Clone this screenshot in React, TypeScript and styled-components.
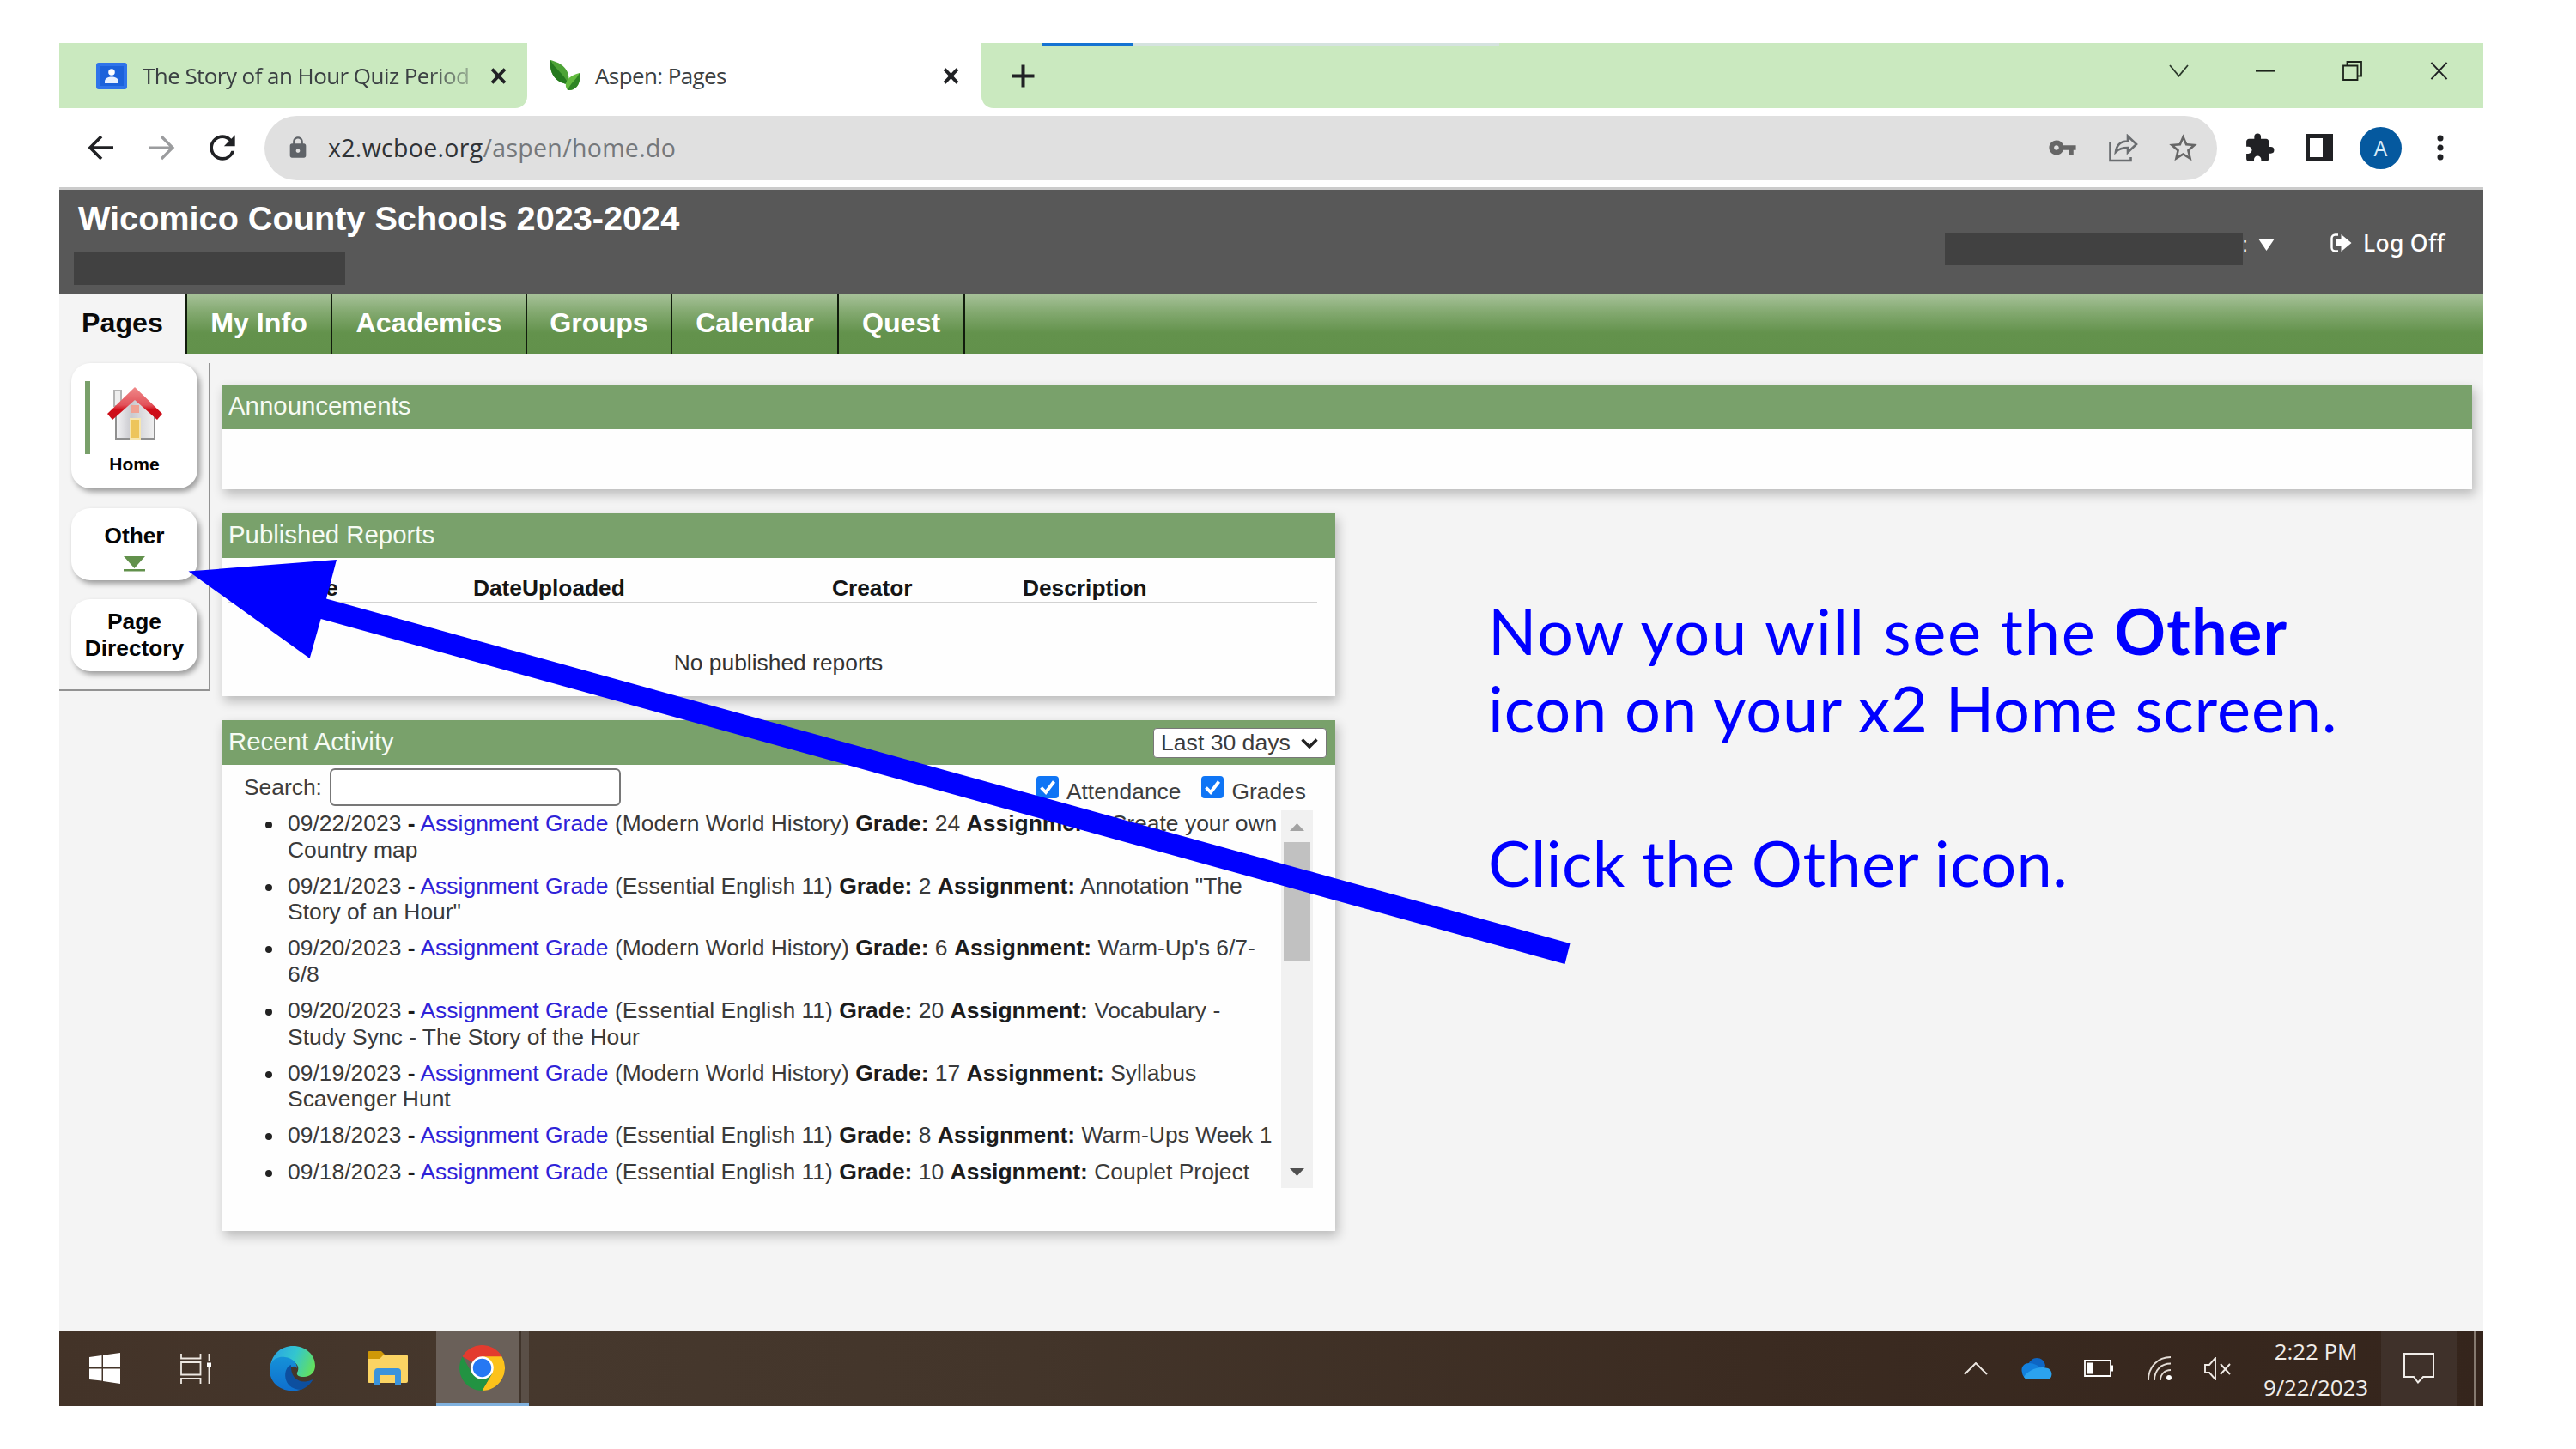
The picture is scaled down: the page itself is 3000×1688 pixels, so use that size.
import React from "react";
import styled, { createGlobalStyle } from "styled-components";
import { MdVpnKey, MdExtension, MdStarBorder, MdLock, MdRefresh } from "react-icons/md";

const ARIAL = `"Liberation Sans", Arial, sans-serif`;
const UI = `"Open Sans", "Noto Sans", sans-serif`;

const Global = createGlobalStyle`
  * { box-sizing: border-box; }
  body { margin: 0; background: #fff; font-family: ${ARIAL}; overflow: hidden; }
  svg { display: block; flex: none; }
`;

const Page = styled.div`
  position: relative;
  width: 3000px;
  height: 1688px;
  padding: 50px 108px 50px 69px;
  background: #fff;
`;
const Desktop = styled.div`
  display: flex;
  flex-direction: column;
  width: 2823px;
  height: 1588px;
`;
const Spacer = styled.div<{ $w?: number }>`
  flex: ${(p) => (p.$w === undefined ? "1" : "none")};
  width: ${(p) => (p.$w === undefined ? "auto" : p.$w + "px")};
`;

/* Browser chrome */
const TabStrip = styled.div`
  position: relative;
  display: flex;
  align-items: stretch;
  height: 76px;
  background: #cae9bf;
`;
const LoadBar = styled.div`
  position: absolute;
  top: 0;
  left: 1145px;
  width: 532px;
  height: 4px;
  background: linear-gradient(90deg, #1473d2 0 105px, #d5e3df 105px);
`;
const StripBack = styled.div`
  flex: 1;
  display: flex;
  background: #fff;
`;
const Tab = styled.div<{ $active?: boolean }>`
  display: flex;
  align-items: center;
  width: ${(p) => (p.$active ? 529 : 545)}px;
  padding-left: ${(p) => (p.$active ? 26 : 43)}px;
  background: ${(p) => (p.$active ? "#fff" : "#cae9bf")};
  border-radius: ${(p) => (p.$active ? "14px 14px 0 0" : "0 0 14px 0")};
`;
const TabTitle = styled.div<{ $w: number; $fade?: boolean; $ls: number }>`
  flex: none;
  width: ${(p) => p.$w}px;
  font: 26px/40px ${UI};
  letter-spacing: ${(p) => p.$ls}px;
  white-space: nowrap;
  color: #3b4043;
  ${(p) => p.$fade && "mask-image: linear-gradient(90deg, #000 86%, rgba(0,0,0,.3));"}
`;
const StripRest = styled.div`
  flex: 1;
  display: flex;
  align-items: center;
  background: #cae9bf;
  border-radius: 0 0 0 14px;
  padding-left: 35px;
`;
const WindowControls = styled.div`
  display: flex;
  align-items: center;
  gap: 78px;
  padding: 0 40px 12px 0;
`;
const Toolbar = styled.div`
  display: flex;
  align-items: center;
  height: 92px;
  background: #fff;
`;
const Omnibox = styled.div`
  display: flex;
  align-items: center;
  width: 2274px;
  height: 75px;
  margin-left: 27px;
  padding-left: 25px;
  border-radius: 38px;
  background: #e0e0e0;
  color: #666;
`;
const Url = styled.div`
  margin-left: 21px;
  font: 28.5px/40px ${UI};
  letter-spacing: 0.31px;
  white-space: nowrap;
  color: #75787b;
  b { font-weight: 400; color: #303336; }
`;
const Avatar = styled.div`
  width: 49px;
  height: 49px;
  margin-left: 31px;
  border-radius: 50%;
  background: #05599f;
  color: #d7ecf8;
  font: 25px/49px ${UI};
  text-align: center;
`;

/* Site header */
const Header = styled.div`
  display: flex;
  justify-content: space-between;
  height: 125px;
  border-top: 3px solid #cbcbcb;
  background: #585858;
`;
const Brand = styled.div`
  display: flex;
  flex-direction: column;
  padding: 11px 0 0 22px;
`;
const Title = styled.div`
  font: bold 39.65px/44px ${ARIAL};
  color: #fff;
  white-space: nowrap;
`;
const Redacted = styled.div<{ $w: number }>`
  width: ${(p) => p.$w}px;
  height: 38px;
  background: #414141;
`;
const BrandRedacted = styled(Redacted)`
  margin: 18px 0 0 -5px;
`;
const Session = styled.div`
  display: flex;
  align-items: center;
  height: 38px;
  margin-top: 50px;
  padding-right: 42px;
`;
const Account = styled.div`
  display: flex;
  align-items: center;
  gap: 12px;
  padding-bottom: 10px;
  margin: 0 65px 0 -1px;
  font: 24px/28px ${ARIAL};
  color: #fff;
`;
const LogOff = styled.div`
  display: flex;
  align-items: center;
  gap: 13px;
  width: 136px;
  padding-bottom: 15px;
  font: 500 26.5px/30px "Noto Sans", ${UI};
  letter-spacing: 0.3px;
  white-space: nowrap;
  color: #fff;
`;

/* Navigation */
const Nav = styled.div`
  display: flex;
  height: 69px;
  background: linear-gradient(#a6c198 0%, #83a970 30%, #63924c 65%, #62914b 100%);
`;
const NavTab = styled.div<{ $w: number; $active?: boolean }>`
  width: ${(p) => p.$w}px;
  border-right: 2px solid #111c0c;
  background: ${(p) => (p.$active ? "#f4f4f4" : "transparent")};
  color: ${(p) => (p.$active ? "#0a0a0a" : "#fff")};
  font: bold 32.2px/67px ${ARIAL};
  text-align: center;
  white-space: nowrap;
`;

/* Page body */
const Body = styled.div`
  flex: 1;
  display: flex;
  align-items: flex-start;
  background: #f4f4f4;
`;
const Sidebar = styled.div`
  display: flex;
  flex-direction: column;
  width: 176px;
  height: 382px;
  margin-top: 11px;
  padding-left: 14px;
  border-right: 2px solid #929292;
  border-bottom: 2px solid #929292;
`;
const SideCard = styled.div<{ $h: number; $gap: number; $size?: number; $top?: number; $inner?: number }>`
  position: relative;
  display: flex;
  flex-direction: column;
  align-items: center;
  justify-content: center;
  gap: ${(p) => p.$inner ?? 0}px;
  flex: none;
  width: 147px;
  height: ${(p) => p.$h}px;
  margin-bottom: ${(p) => p.$gap}px;
  padding-top: ${(p) => p.$top ?? 0}px;
  border-radius: 22px;
  background: #fff;
  box-shadow: 3px 4px 6px rgba(0, 0, 0, 0.36);
  font: bold ${(p) => p.$size ?? 26.3}px/31px ${ARIAL};
  text-align: center;
  color: #050505;
`;
const ActiveMark = styled.div`
  position: absolute;
  left: 16px;
  top: 21px;
  width: 6px;
  height: 85px;
  background: #79a06a;
`;
const Main = styled.div`
  display: flex;
  flex-direction: column;
  gap: 28px;
  padding: 36px 0 0 13px;
`;
const Panel = styled.div<{ $w: number; $h: number }>`
  width: ${(p) => p.$w}px;
  height: ${(p) => p.$h}px;
  background: #fefefe;
  box-shadow: 3px 6px 12px rgba(0, 0, 0, 0.24);
`;
const PanelHead = styled.div`
  display: flex;
  justify-content: space-between;
  height: 52px;
  padding: 0 10px 0 8px;
  background: #79a16b;
  color: #f6fbf3;
  font: 29.4px/50px ${ARIAL};
`;
const HeadRow = styled.div`
  display: grid;
  grid-template-columns: 229px 418px 222px 1fr;
  height: 35px;
  margin: 18px 21px 0 8px;
  padding-left: 56px;
  border-bottom: 2px solid #d2d2d2;
  font: bold 26.3px/34px ${ARIAL};
  color: #151515;
`;
const Empty = styled.div`
  margin-top: 51px;
  text-align: center;
  font: 26.4px/36px ${ARIAL};
  color: #333;
`;
const Select = styled.div`
  display: flex;
  align-items: center;
  justify-content: space-between;
  width: 202px;
  height: 35px;
  margin-top: 9px;
  padding: 0 9px 0 8px;
  border: 1px solid #777;
  border-radius: 4px;
  background: #fff;
  color: #3c3c3c;
  font: 26.6px/31px ${ARIAL};
  white-space: nowrap;
`;
const FilterRow = styled.div`
  display: flex;
  align-items: center;
  height: 52px;
  padding: 0 34px 0 26px;
  font: 26.4px/30px ${ARIAL};
  color: #3e3e3e;
`;
const SearchBox = styled.div`
  width: 339px;
  height: 44px;
  margin-left: 9px;
  border: 2px solid #777;
  border-radius: 6px;
  background: #fff;
`;
const CheckLabel = styled.div`
  padding-top: 10px;
  margin-left: 9px;
`;
const Feed = styled.div`
  display: flex;
  justify-content: space-between;
  height: 442px;
  padding: 1px 26px 0 0;
`;
const List = styled.ul`
  margin: 0;
  padding: 0 0 0 77px;
  font: 26.46px/30.5px ${ARIAL};
  color: #3a3a3a;
  white-space: nowrap;
  list-style: none;
`;
const Item = styled.li`
  position: relative;
  margin-bottom: 11.7px;
  &::before {
    content: "";
    position: absolute;
    left: -26px;
    top: 13px;
    width: 8px;
    height: 8px;
    border-radius: 50%;
    background: #222;
  }
  a { color: #2f22d8; }
  b { color: #1c1c1c; }
`;
const Scrollbar = styled.div`
  display: flex;
  flex-direction: column;
  align-items: center;
  width: 37px;
  height: 440px;
  background: #f1f1f1;
  padding: 15px 0 14px;
`;
const Thumb = styled.div`
  width: 31px;
  height: 138px;
  margin-top: 13px;
  background: #c1c1c1;
`;

/* Taskbar */
const Taskbar = styled.div`
  display: flex;
  align-items: center;
  height: 88px;
  padding-left: 34px;
  background: linear-gradient(90deg, #433328 0%, #46382d 20%, #43352a 40%, #3b2b21 70%, #35251c 100%);
`;
const RunningApp = styled.div`
  display: flex;
  align-items: center;
  justify-content: center;
  width: 108px;
  height: 88px;
  padding: 3px 1px 0 0;
  border-bottom: 4px solid #80b1de;
  background: linear-gradient(90deg, #6a6059 0 97px, #40342b 97px 99px, #5a4f47 99px);
`;
const Clock = styled.div`
  width: 126px;
  padding-top: 2px;
  font: 26px/42px ${UI};
  letter-spacing: -0.1px;
  text-align: center;
  white-space: nowrap;
  color: #f0ece8;
`;
const Notifications = styled.div`
  display: flex;
  align-items: center;
  justify-content: center;
  width: 88px;
  height: 88px;
  margin-left: 13px;
  background: #3f312a;
`;
const ShowDesktop = styled.div`
  width: 11px;
  height: 88px;
  margin-left: 20px;
  border-left: 2px solid #85796f;
`;

/* Annotation laid over the screen */
const Callout = styled.div`
  position: absolute;
  left: 1733px;
  top: 690px;
  font: 74px/90px Lato, ${UI};
  color: #0000ff;
  white-space: nowrap;
`;
const Line = styled.div<{ $ls: number }>`
  height: 90px;
  letter-spacing: ${(p) => p.$ls}px;
  b { letter-spacing: 1.2px; }
`;
const Arrow = styled.svg`
  position: absolute;
  left: 0;
  top: 0;
`;

const CloseX = ({ s = 19, w = 4 }: { s?: number; w?: number }) => (
  <svg width={s} height={s} viewBox="0 0 19 19">
    <path d="M2 1.5 17 17.5M17 1.5 2 17.5" stroke="#202124" strokeWidth={w} />
  </svg>
);

const Check = () => (
  <svg width="26" height="26" viewBox="0 0 26 26">
    <rect width="26" height="26" rx="4" fill="#0f75f5" />
    <path d="M5.5 13.5 11 19 20.5 6.5" fill="none" stroke="#fff" strokeWidth="3.8" />
  </svg>
);

type Entry = { date: string; course: string; grade: string; title: string; rest?: string };
const WORLD = "Modern World History";
const ENGLISH = "Essential English 11";
const entries: Entry[] = [
  { date: "09/22/2023", course: WORLD, grade: "24", title: "Create your own", rest: "Country map" },
  { date: "09/21/2023", course: ENGLISH, grade: "2", title: 'Annotation "The', rest: 'Story of an Hour"' },
  { date: "09/20/2023", course: WORLD, grade: "6", title: "Warm-Up's 6/7-", rest: "6/8" },
  { date: "09/20/2023", course: ENGLISH, grade: "20", title: "Vocabulary -", rest: "Study Sync - The Story of the Hour" },
  { date: "09/19/2023", course: WORLD, grade: "17", title: "Syllabus", rest: "Scavenger Hunt" },
  { date: "09/18/2023", course: ENGLISH, grade: "8", title: "Warm-Ups Week 1" },
  { date: "09/18/2023", course: ENGLISH, grade: "10", title: "Couplet Project" },
];

export default function App() {
  return (
    <Page>
      <Global />
      <Desktop>
        <TabStrip>
          <StripBack>
            <Tab>
              <svg width="36" height="31" viewBox="0 0 36 31">
                <rect width="36" height="31" rx="3" fill="#2f74ea" />
                <rect x="4" y="4" width="28" height="23" fill="#1c62db" />
                <circle cx="18" cy="11" r="3.8" fill="#fff" />
                <path d="M10 24v-2c0-4 4-5.500 8-5.500s8 1.500 8 5.500v2z" fill="#e8f1ff" />
              </svg>
              <Spacer $w={18} />
              <TabTitle $w={384} $fade $ls={-0.56}>The Story of an Hour Quiz Period</TabTitle>
              <Spacer $w={21} />
              <CloseX />
            </Tab>
            <Tab $active>
              <svg width="36" height="36" viewBox="0 0 36 36">
                <path d="M1 0C13 3 25 10 22 28 10 27-1 18 1 0z" fill="#4da336" />
                <path d="M1 0C6 10 17 16 22 28 10 27-1 18 1 0z" fill="#257a1e" />
                <path d="M35 15c2 12-4 21-14 20-6-8 1-17 14-20z" fill="#63bb3f" />
                <path d="M35 15c-4 8-11 12-14 20 10 1 16-8 14-20z" fill="#2f8524" />
              </svg>
              <Spacer $w={17} />
              <TabTitle $w={200} $ls={-0.6}>Aspen: Pages</TabTitle>
              <Spacer $w={205} />
              <CloseX />
            </Tab>
            <StripRest>
              <svg width="27" height="27" viewBox="0 0 27 27">
                <path d="M13.500 0.500v26M0.500 13.500h26" stroke="#202124" strokeWidth="4" />
              </svg>
              <Spacer />
              <WindowControls>
                <svg width="23" height="15" viewBox="0 0 23 15"><path d="M1 1l10.500 12.500L22 1" fill="none" stroke="#2c3a2c" strokeWidth="1.800" /></svg>
                <svg width="23" height="3" viewBox="0 0 23 3"><path d="M0 1.500h23" stroke="#1c241b" strokeWidth="2.200" /></svg>
                <svg width="23" height="23" viewBox="0 0 23 23"><path d="M1 5.500h16.500V22H1zM5.500 5V1H22v16.500h-4" fill="none" stroke="#1c241b" strokeWidth="1.800" /></svg>
                <CloseX s={23} w={1.6} />
              </WindowControls>
            </StripRest>
          </StripBack>
          <LoadBar />
        </TabStrip>

        <Toolbar>
          <Spacer $w={33} />
          <svg width="31" height="30" viewBox="0 0 31 30"><path d="M30 15H3M16 2 3 15l13 13" fill="none" stroke="#202124" strokeWidth="3.600" /></svg>
          <Spacer $w={40} />
          <svg width="31" height="30" viewBox="0 0 31 30"><path d="M0 15h28M15 2l13 13-13 13" fill="none" stroke="#9b9c9e" strokeWidth="3.200" /></svg>
          <Spacer $w={33} />
          <MdRefresh size={44} color="#202124" />
          <Omnibox>
            <MdLock size={28} color="#5f6368" />
            <Url><b>x2.wcboe.org</b>/aspen/home.do</Url>
            <Spacer />
            <MdVpnKey size={34} />
            <Spacer $w={37} />
            <svg width="34" height="33" viewBox="0 0 34 33">
              <path d="M1.500 9v22h24v-4M8 21c1-8 6-12.500 14-12.500V2.500l10 9.500-10 9.500V16c-6 0-10 1-14 5z" fill="none" stroke="#6a6d70" strokeWidth="2.600" />
            </svg>
            <Spacer $w={33} />
            <MdStarBorder size={39} />
            <Spacer $w={20} />
          </Omnibox>
          <Spacer $w={31} />
          <MdExtension size={37} color="#202124" />
          <Spacer $w={35} />
          <svg width="32" height="32" viewBox="0 0 32 32"><path d="M0 0h32v32H0zM5 5v22h15V5z" fill="#202124" fillRule="evenodd" /></svg>
          <Avatar>A</Avatar>
          <Spacer $w={41} />
          <svg width="8" height="32" viewBox="0 0 8 32"><g fill="#202124"><circle cx="4" cy="5" r="3.500" /><circle cx="4" cy="16" r="3.500" /><circle cx="4" cy="27" r="3.500" /></g></svg>
        </Toolbar>

        <Header>
          <Brand>
            <Title>Wicomico County Schools 2023-2024</Title>
            <BrandRedacted $w={316} />
          </Brand>
          <Session>
            <Redacted $w={347} />
            <Account>
              :
              <svg width="19" height="14" viewBox="0 0 19 14"><path d="M0 0h19L9.500 14z" fill="#fff" /></svg>
            </Account>
            <LogOff>
              <svg width="25" height="22" viewBox="0 0 25 22">
                <path d="M9 1.500H5.500a4 4 0 0 0-4 4v11a4 4 0 0 0 4 4H9" fill="none" stroke="#fff" strokeWidth="2.400" />
                <path d="M6.500 7h6V1l12 10-12 10v-6h-6z" fill="#fff" />
              </svg>
              Log Off
            </LogOff>
          </Session>
        </Header>

        <Nav>
          <NavTab $w={149} $active>Pages</NavTab>
          <NavTab $w={169}>My Info</NavTab>
          <NavTab $w={227}>Academics</NavTab>
          <NavTab $w={169}>Groups</NavTab>
          <NavTab $w={194}>Calendar</NavTab>
          <NavTab $w={147}>Quest</NavTab>
        </Nav>

        <Body>
          <Sidebar>
            <SideCard $h={146} $gap={23} $size={21} $top={15} $inner={12}>
              <ActiveMark />
              <svg width="64" height="62" viewBox="0 0 64 62">
                <defs>
                  <linearGradient id="wall" x1="0" x2="1"><stop offset="0" stopColor="#f4f4f6" /><stop offset=".4" stopColor="#c9c9ce" /><stop offset="1" stopColor="#f1f1f1" /></linearGradient>
                  <linearGradient id="roof" x1="0" y1="0" x2="0" y2="1"><stop offset="0" stopColor="#f08a8a" /><stop offset=".55" stopColor="#e2525a" /><stop offset=".7" stopColor="#d00d18" /><stop offset="1" stopColor="#c8101a" /></linearGradient>
                </defs>
                <path d="M8 4h8v18H8z" fill="#eee" stroke="#b4b4b4" strokeWidth="2" />
                <path d="M10 31 32 10l23 21v29H10z" fill="url(#wall)" stroke="#8f8f8f" strokeWidth="2" />
                <path d="M32 0 0 31l6 7 26-23 26 23 6-7z" fill="url(#roof)" />
                <rect x="28" y="21" width="9" height="9" fill="#f0a292" />
                <rect x="27" y="37" width="11" height="23" fill="#edc55c" stroke="#f6e6b0" strokeWidth="2" />
              </svg>
              Home
            </SideCard>
            <SideCard $h={84} $gap={22} $top={7} $inner={8}>
              Other
              <svg width="26" height="18" viewBox="0 0 26 18"><path d="M0 0h25L12.500 14zM0 15h25v2.500H0z" fill="#62914c" /></svg>
            </SideCard>
            <SideCard $h={84} $gap={0}>Page<br />Directory</SideCard>
          </Sidebar>
          <Main>
            <Panel $w={2621} $h={122}><PanelHead>Announcements</PanelHead></Panel>
            <Panel $w={1297} $h={213}>
              <PanelHead>Published Reports</PanelHead>
              <HeadRow><span>Name</span><span>DateUploaded</span><span>Creator</span><span>Description</span></HeadRow>
              <Empty>No published reports</Empty>
            </Panel>
            <Panel $w={1297} $h={595}>
              <PanelHead>
                Recent Activity
                <Select>Last 30 days
                  <svg width="20" height="12" viewBox="0 0 20 12"><path d="M1.500 1.500 10 10l8.500-8.500" fill="none" stroke="#222" strokeWidth="3.400" /></svg>
                </Select>
              </PanelHead>
              <FilterRow>
                Search:<SearchBox />
                <Spacer />
                <Check /><CheckLabel>Attendance</CheckLabel>
                <Spacer $w={24} />
                <Check /><CheckLabel>Grades</CheckLabel>
              </FilterRow>
              <Feed>
                <List>
                  {entries.map((e, i) => (
                    <Item key={i}>
                      {e.date} <b>-</b> <a>Assignment Grade</a> ({e.course}) <b>Grade:</b> {e.grade} <b>Assignment:</b> {e.title}
                      {e.rest && <><br />{e.rest}</>}
                    </Item>
                  ))}
                </List>
                <Scrollbar>
                  <svg width="17" height="9" viewBox="0 0 17 9"><path d="M0 9h17L8.500 0z" fill="#a3a3a3" /></svg>
                  <Thumb />
                  <Spacer />
                  <svg width="17" height="9" viewBox="0 0 17 9"><path d="M0 0h17L8.500 9z" fill="#505050" /></svg>
                </Scrollbar>
              </Feed>
            </Panel>
          </Main>
        </Body>

        <Taskbar>
          <svg width="37" height="36" viewBox="0 0 37 36"><path d="M1 5l14.500-2v14H1zM17 2.800 37 0v17H17zM1 18.500h14.500v14L1 31zM17 18.500h20V36l-20-3z" fill="#fff" /></svg>
          <Spacer $w={70} />
          <svg width="36" height="35" viewBox="0 0 36 35"><g fill="none" stroke="#eee8e2" strokeWidth="1.800"><path d="M1 0v5.500h22.500V0M1 10h22.500v14.500H1zM1 35v-6h22.500v6M33.500 0v9M33.500 16v19" /></g><rect x="31" y="10.500" width="5" height="5" fill="#fff" /></svg>
          <Spacer $w={68} />
          <svg width="53" height="53" viewBox="0 0 53 53">
            <defs>
              <linearGradient id="edgeTop" x1="0" y1=".3" x2="1" y2=".6"><stop offset="0" stopColor="#2aa4e4" /><stop offset=".5" stopColor="#33c6cf" /><stop offset="1" stopColor="#64e05c" /></linearGradient>
              <linearGradient id="edgeSide" x1="0" y1="0" x2="0" y2="1"><stop offset="0" stopColor="#1591d8" /><stop offset="1" stopColor="#0f6fce" /></linearGradient>
            </defs>
            <path d="M1 23C3 9 14 0 27 0c15 0 26 10 26 23 0 8-6 13-13 13-6 0-9-2-8-5 3-5 1-10-5-13z" fill="url(#edgeTop)" />
            <path d="M1 22c3-8 11-10 17-9 8 1 14 6 14 13-4-5-10-1-9 7 1 9 8 15 15 17C26 56 0 51 0 27c0-2 .300-3.500 1-5z" fill="url(#edgeSide)" />
            <path d="M25 22c-10 3-11 28 11 29 6-2 11-6 14-11 1-1 0-1-2 0-14 5-24-3-23-18z" fill="#0d4f9f" />
          </svg>
          <Spacer $w={60} />
          <svg width="48" height="40" viewBox="0 0 48 40">
            <path d="M1 2q0-2 2-2h14l4 4v8H1z" fill="#cf9808" />
            <path d="M1 9h14l5-5h26q2 0 2 2v29q0 2-2 2H3q-2 0-2-2z" fill="#fbd463" />
            <path d="M9 24q0-4 4-4h23q4 0 4 4v15h-7V28H16v11H9z" fill="#3a93dc" />
          </svg>
          <Spacer $w={33} />
          <RunningApp>
            <svg width="53" height="53" viewBox="0 0 48 48">
              <path d="M24 24 3.200 12A24 24 0 0 1 44.800 12z" fill="#e33b2e" />
              <path d="M44.800 12H24v12l10.400 6L24 48A24 24 0 0 0 44.800 12z" fill="#fcc21b" />
              <path d="M3.200 12 13.600 30 24 36l10.400-6L24 48A24 24 0 0 1 3.200 12z" fill="#229342" />
              <circle cx="24" cy="24" r="12" fill="#fff" />
              <circle cx="24" cy="24" r="9.700" fill="#2678f3" />
            </svg>
          </RunningApp>
          <Spacer />
          <svg width="28" height="15" viewBox="0 0 28 15"><path d="M1 14 14 1l13 13" fill="none" stroke="#ece6e0" strokeWidth="2" /></svg>
          <Spacer $w={39} />
          <svg width="37" height="25" viewBox="0 0 37 25">
            <path d="M7 10C9 3 14 0 18 0c5 0 9 3 10 9l-4 6z" fill="#0e66c4" />
            <path d="M1 17C-1 11 3 6 9 6c6 0 11 3 15 7L5 24c-2-2-4-4-4-7z" fill="#1380dd" />
            <path d="M3 22c3-6 14-12 23-11l5 1c6 2 6 13-1 13H8c-2 0-4-1-5-3z" fill="#2ba2ee" />
          </svg>
          <Spacer $w={36} />
          <svg width="34" height="20" viewBox="0 0 34 20"><path d="M1 1h30v18H1z" fill="none" stroke="#fff" strokeWidth="1.800" /><path d="M3 3.500h8v13H3zM32 6.500h2v7h-2z" fill="#fff" /></svg>
          <Spacer $w={40} />
          <svg width="28" height="28" viewBox="0 0 28 28"><g fill="none" stroke="#e4ddd6" strokeWidth="1.800"><path d="M1 28C1 12 12 1 27 1M8 28C8 16 16 8.500 27 8.500M15 28c0-7 5-12 12-12" /></g><circle cx="25" cy="25" r="3" fill="#fff" /></svg>
          <Spacer $w={38} />
          <svg width="31" height="27" viewBox="0 0 31 27"><path d="M1 9h5l7-8v25l-7-8H1zM19 8l11 12M30 8 19 20" fill="none" stroke="#efeae5" strokeWidth="1.900" /></svg>
          <Spacer $w={36} />
          <Clock>2:22 PM<br />9/22/2023</Clock>
          <Notifications>
            <svg width="36" height="36" viewBox="0 0 36 36"><path d="M1 1h34v27H23l-6 6.500-5-6.500H1z" fill="none" stroke="#f0ece8" strokeWidth="2" /></svg>
          </Notifications>
          <ShowDesktop />
        </Taskbar>
      </Desktop>

      <Callout>
        <Line $ls={1.73}>Now you will see the <b>Other</b></Line>
        <Line $ls={0.9}>icon on your x2 Home screen.</Line>
        <Line $ls={0} />
        <Line $ls={0.45}>Click the Other icon.</Line>
      </Callout>
      <Arrow width="3000" height="1688" viewBox="0 0 3000 1688" pointerEvents="none">
        <path d="M219.500 665.500 392 652l-12 45.500L1828.500 1099l-6 24L373.700 721l-13 46z" fill="#0000ff" />
      </Arrow>
    </Page>
  );
}
